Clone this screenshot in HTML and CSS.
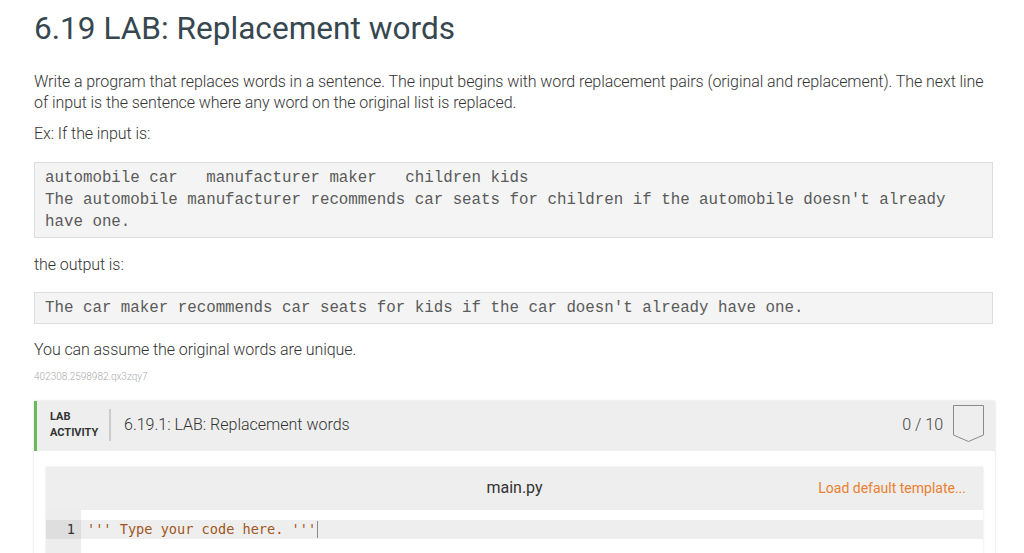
FILE: index.html
```html
<!DOCTYPE html>
<html>
<head>
<meta charset="utf-8">
<link rel="stylesheet" href="styles.css">
</head>
<body>
<div class="page">
  <h1 class="title">6.19 LAB: Replacement words</h1>
  <p class="desc">Write a program that replaces words in a sentence. The input begins with word replacement pairs (original and replacement). The next line of input is the sentence where any word on the original list is replaced.</p>
  <p class="ex">Ex: If the input is:</p>
  <pre class="code code-in">automobile car   manufacturer maker   children kids
The automobile manufacturer recommends car seats for children if the automobile doesn't already have one.</pre>
  <p class="out">the output is:</p>
  <pre class="code code-out">The car maker recommends car seats for kids if the car doesn't already have one.</pre>
  <p class="assume">You can assume the original words are unique.</p>
  <div class="ident">402308.2598982.qx3zqy7</div>

  <div class="card">
    <div class="card-head">
      <div class="lab-label">LAB<br>ACTIVITY</div>
      <div class="divider"></div>
      <div class="lab-title">6.19.1: LAB: Replacement words</div>
      <div class="score">0 / 10</div>
      <svg class="badge" width="32" height="38" viewBox="0 0 32 38">
        <path d="M0.5 0.5 H30.5 V30 L15.5 36.5 L0.5 30 Z" fill="none" stroke="#8a8a8a" stroke-width="1"/>
      </svg>
    </div>
    <div class="card-body">
      <div class="editor">
        <div class="editor-head">
          <div class="filename">main.py</div>
          <div class="load">Load default template...</div>
        </div>
        <div class="editor-body">
          <div class="gutter-pad"></div>
          <div class="line active">
            <div class="ln">1</div>
            <div class="lc"><span class="str">''' Type your code here. '''</span><span class="cursor"></span></div>
          </div>
          <div class="line">
            <div class="ln"></div>
            <div class="lc"></div>
          </div>
        </div>
      </div>
    </div>
  </div>
</div>
</body>
</html>
```
FILE: styles.css
```css
html, body {
  margin: 0;
  padding: 0;
  background: #fff;
}
body {
  font-family: Roboto, "Liberation Sans", sans-serif;
  color: #333;
}
.page {
  width: 959px;
  padding: 7px 0 0 34px;
}
.title {
  margin: 0 0 21px;
  font-size: 31.6px;
  line-height: 43px;
  font-weight: 400;
  color: #37474f;
}
p {
  margin: 0;
  font-size: 16px;
  line-height: 21px;
  font-weight: 300;
  letter-spacing: -0.08px;
  color: #333;
}
.desc { margin-bottom: 10px; }
.ex { margin-bottom: 18px; }
.out { margin-bottom: 17px; }
.assume { margin-bottom: 10px; }
.code {
  margin: 0;
  background: #f4f4f4;
  border: 1px solid #dcdcdc;
  padding: 4px 10px;
  font-family: "Liberation Mono", "Courier New", monospace;
  font-size: 15.8px;
  line-height: 22px;
  color: #5a5a5a;
  white-space: pre-wrap;
}
.code-in { margin-bottom: 16px; }
.code-out { margin-bottom: 15px; }
.ident {
  font-size: 10px;
  line-height: 14px;
  color: #aaa;
  font-weight: 300;
  margin-bottom: 17px;
}
.card {
  width: 961px;
  background: #fff;
  box-shadow: 0 0 2px rgba(0,0,0,0.18);
}
.card-head {
  height: 50px;
  box-sizing: border-box;
  background: #eee;
  border-left: 3px solid #6cb95c;
  display: flex;
  align-items: center;
  padding: 0 10px 3px 13px;
}
.lab-label {
  font-size: 11px;
  line-height: 16px;
  font-weight: 700;
  color: #333;
  width: 59px;
}
.divider {
  width: 2px;
  height: 32px;
  background: #ccc;
  margin-right: 13px;
}
.lab-title {
  font-size: 16px;
  font-weight: 300;
  color: #333;
  flex: 1;
}
.score {
  font-size: 16px;
  font-weight: 300;
  color: #444;
  margin-right: 10px;
}
.badge {
  display: block;
  align-self: flex-start;
  margin-top: 4px;
}
.card-body {
  padding: 16px 12px 0 12px;
}
.editor {
  box-shadow: 0 0 2px rgba(0,0,0,0.12);
}
.editor-head {
  height: 43px;
  box-sizing: border-box;
  padding-bottom: 2px;
  background: #eee;
  display: flex;
  align-items: center;
  position: relative;
  justify-content: flex-end;
  padding-right: 17px;
}
.filename {
  position: absolute;
  left: 0;
  right: 0;
  text-align: center;
  font-size: 16px;
  color: #333;
  font-weight: 400;
}
.load {
  position: relative;
  font-size: 14px;
  color: #ea8030;
  font-weight: 400;
}
.editor-body {
  background: #fff;
}
.gutter-pad {
  height: 10px;
  width: 35px;
  background: #ededed;
}
.line {
  display: flex;
  height: 19px;
}
.ln {
  width: 35px;
  background: #ededed;
  box-sizing: border-box;
  padding-right: 6px;
  text-align: right;
  font-family: "DejaVu Sans Mono", monospace;
  font-size: 13.6px;
  line-height: 19px;
  color: #333;
}
.lc {
  flex: 1;
  padding-left: 6px;
  font-family: "DejaVu Sans Mono", monospace;
  font-size: 13.6px;
  line-height: 19px;
  white-space: pre;
  display: flex;
  align-items: center;
}
.line.active .ln { background: #dedede; }
.line.active .lc { background: #eee; }
.str { color: #a0561c; }
.cursor {
  display: inline-block;
  width: 1px;
  height: 17px;
  background: #888;
  margin-left: 1px;
}
```
